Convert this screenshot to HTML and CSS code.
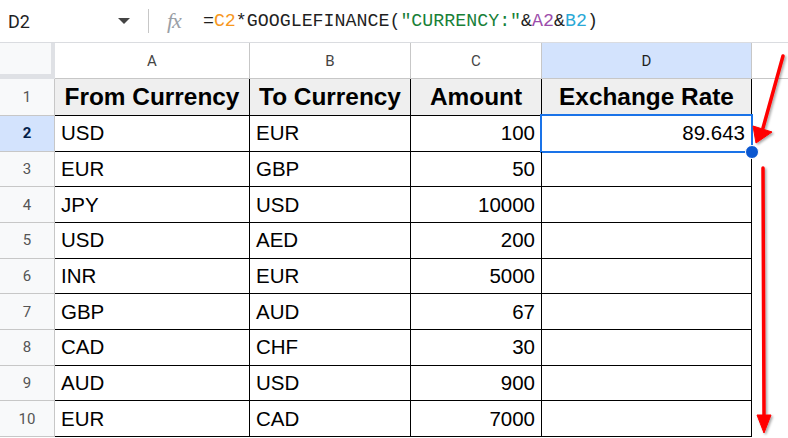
FILE: index.html
```html
<!DOCTYPE html>
<html>
<head>
<meta charset="utf-8">
<link rel="stylesheet" href="styles.css">
</head>
<body>
<div class="formula-bar">
  <div class="name-box">D2</div>
  <div class="caret"></div>
  <div class="sep"></div>
  <div class="fx">fx</div>
  <div class="formula"><span class="k">=</span><span class="c-orange">C2</span>*GOOGLEFINANCE(<span class="c-green">"CURRENCY:"</span>&amp;<span class="c-purple">A2</span>&amp;<span class="c-cyan">B2</span>)</div>
</div>
<div class="sheet">
  <div class="corner"></div>
  <div class="colh">A</div>
  <div class="colh">B</div>
  <div class="colh">C</div>
  <div class="colh sel">D</div>
  <div class="colh blank"></div>

  <div class="rowh">1</div>
  <div class="cell hd">From Currency</div>
  <div class="cell hd">To Currency</div>
  <div class="cell hd">Amount</div>
  <div class="cell hd last">Exchange Rate</div>
  <div class="empty"></div>

  <div class="rowh sel">2</div>
  <div class="cell">USD</div>
  <div class="cell">EUR</div>
  <div class="cell num">100</div>
  <div class="cell num last active">89.643<span class="handle"></span></div>
  <div class="empty"></div>

  <div class="rowh">3</div>
  <div class="cell">EUR</div>
  <div class="cell">GBP</div>
  <div class="cell num">50</div>
  <div class="cell last"></div>
  <div class="empty"></div>

  <div class="rowh">4</div>
  <div class="cell">JPY</div>
  <div class="cell">USD</div>
  <div class="cell num">10000</div>
  <div class="cell last"></div>
  <div class="empty"></div>

  <div class="rowh">5</div>
  <div class="cell">USD</div>
  <div class="cell">AED</div>
  <div class="cell num">200</div>
  <div class="cell last"></div>
  <div class="empty"></div>

  <div class="rowh">6</div>
  <div class="cell">INR</div>
  <div class="cell">EUR</div>
  <div class="cell num">5000</div>
  <div class="cell last"></div>
  <div class="empty"></div>

  <div class="rowh">7</div>
  <div class="cell">GBP</div>
  <div class="cell">AUD</div>
  <div class="cell num">67</div>
  <div class="cell last"></div>
  <div class="empty"></div>

  <div class="rowh">8</div>
  <div class="cell">CAD</div>
  <div class="cell">CHF</div>
  <div class="cell num">30</div>
  <div class="cell last"></div>
  <div class="empty"></div>

  <div class="rowh">9</div>
  <div class="cell">AUD</div>
  <div class="cell">USD</div>
  <div class="cell num">900</div>
  <div class="cell last"></div>
  <div class="empty"></div>

  <div class="rowh">10</div>
  <div class="cell">EUR</div>
  <div class="cell">CAD</div>
  <div class="cell num">7000</div>
  <div class="cell last"></div>
  <div class="empty"></div>
</div>
<svg class="arrows" width="788" height="438" viewBox="0 0 788 438">
  <defs>
    <filter id="sh" x="-50%" y="-50%" width="200%" height="200%">
      <feDropShadow dx="1.5" dy="1.5" stdDeviation="1.2" flood-color="#000" flood-opacity="0.35"/>
    </filter>
  </defs>
  <g filter="url(#sh)" fill="#ff0000" stroke="#ff0000">
    <line x1="783" y1="56" x2="763" y2="128" stroke-width="3.5" stroke-linecap="round"/>
    <polygon points="756,143 753,126 772,132" stroke-width="1" stroke-linejoin="round"/>
    <line x1="763" y1="168" x2="764" y2="418" stroke-width="3.5" stroke-linecap="round"/>
    <polygon points="757,415 771,415 764,433" stroke-width="1" stroke-linejoin="round"/>
  </g>
</svg>
</body>
</html>
```

FILE: styles.css
```css
* { box-sizing: border-box; }
html, body {
  margin: 0;
  padding: 0;
  width: 788px;
  height: 438px;
  overflow: hidden;
  background: #fff;
  font-family: "Liberation Sans", Arial, sans-serif;
  color: #000;
}

.formula-bar {
  height: 43px;
  display: flex;
  align-items: center;
  border-bottom: 1px solid #dadce0;
  background: #fff;
}
.name-box {
  font-family: Roboto, "Liberation Sans", sans-serif;
  font-size: 18px;
  color: #1f1f1f;
  padding-left: 8px;
  width: 118px;
}
.caret {
  width: 0;
  height: 0;
  border-left: 6px solid transparent;
  border-right: 6px solid transparent;
  border-top: 6px solid #444;
}
.sep {
  width: 1px;
  height: 24px;
  background: #c7c7c7;
  margin-left: 18px;
}
.fx {
  font-family: "Liberation Serif", serif;
  font-style: italic;
  font-size: 22px;
  color: #9aa0a6;
  margin-left: 18px;
  letter-spacing: -1px;
}
.formula {
  font-family: "Liberation Mono", monospace;
  font-size: 18.3px;
  color: #1f1f1f;
  margin-left: 22px;
  white-space: pre;
}
.c-orange { color: #f7981d; }
.c-green { color: #188038; }
.c-purple { color: #9c4dab; }
.c-cyan { color: #2aa8d6; }

.sheet {
  display: grid;
  grid-template-columns: 55px 195px 161px 131px 210px 1fr;
  grid-template-rows: 36px 37px repeat(9, 35.67px);
}
.corner {
  background: #f8f9fa;
  border-right: 4px solid #dfe1e5;
  border-bottom: 5px solid #dfe1e5;
}
.colh {
  display: flex;
  align-items: center;
  justify-content: center;
  font-family: Roboto, "Liberation Sans", sans-serif;
  font-size: 15px;
  color: #444;
  border-right: 1px solid #c7c7c7;
  border-bottom: 1px solid #c7c7c7;
  background: #fff;
}
.colh.sel {
  background: #d3e3fd;
  color: #1f1f1f;
}
.colh.blank { border-right: none; }
.rowh {
  display: flex;
  align-items: center;
  justify-content: center;
  font-family: Roboto, "Liberation Sans", sans-serif;
  font-size: 15px;
  color: #555;
  background: #f8f9fa;
  border-right: 1px solid #c7c7c7;
  border-bottom: 1px solid #c7c7c7;
}
.rowh.sel {
  background: #d3e3fd;
  color: #041e49;
  font-weight: bold;
}
.cell {
  position: relative;
  display: flex;
  align-items: center;
  padding: 0 6px;
  font-size: 20.5px;
  border-right: 1px solid #000;
  border-bottom: 1px solid #000;
  white-space: nowrap;
}
.cell.hd {
  background: #efefef;
  font-weight: bold;
  font-size: 24.4px;
  justify-content: center;
  padding: 0 1px;
}
.cell.num { justify-content: flex-end; }
.cell.active::before {
  content: "";
  position: absolute;
  left: -2px;
  top: -2px;
  right: -2px;
  bottom: -2px;
  border: 2px solid #1a73e8;
  pointer-events: none;
}
.handle {
  position: absolute;
  right: -8px;
  bottom: -8px;
  width: 14px;
  height: 14px;
  border-radius: 50%;
  background: #0b57d0;
  border: 1px solid #fff;
  z-index: 2;
}
.empty { background: #fff; }

.arrows {
  position: absolute;
  left: 0;
  top: 0;
  pointer-events: none;
}
```
